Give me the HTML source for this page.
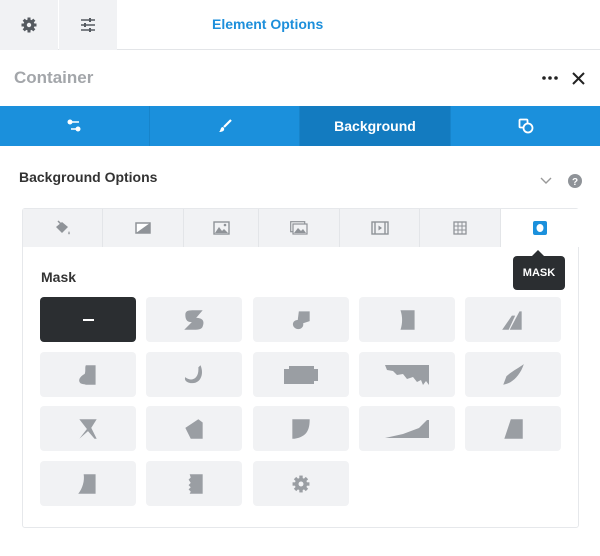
<!DOCTYPE html>
<html><head><meta charset="utf-8"><style>
*{margin:0;padding:0;box-sizing:border-box}
body{width:600px;height:556px;background:#fff;font-family:"Liberation Sans",sans-serif;position:relative;overflow:hidden}
.abs{position:absolute}
.top{left:0;top:0;width:600px;height:50px;border-bottom:1px solid #e3e5e8}
.tb{top:0;height:50px;background:#f1f2f4;display:flex;align-items:center;justify-content:center}
.bar{left:0;top:106px;width:600px;height:40px;background:#1b90dc;display:flex}
.bar div{height:40px;display:flex;align-items:center;justify-content:center;color:#fff;font-weight:bold;font-size:14px;border-right:1px solid #1784cb}
.panel{left:22px;top:208px;width:557px;height:320px;border:1px solid #e6e8eb;border-radius:3px}
.tab{position:absolute;top:0;height:38px;background:#f1f2f4;border-right:1px solid #e3e5e8;display:flex;align-items:center;justify-content:center}
.cell{position:absolute;width:96px;height:45px;background:#f1f2f4;border-radius:4px;display:flex;align-items:center;justify-content:center}
.cell svg{width:26px;height:26px}
</style></head><body>
<div class="abs top"></div>
<div class="abs tb" style="left:0;width:58px"><svg width="16" height="16" viewBox="0 0 16 16"><g fill="#555a60"><circle cx="8" cy="8" r="5.5"/><rect x="6.5" y="0.5" width="3" height="15"/><rect x="0.5" y="6.5" width="15" height="3"/><rect x="6.5" y="0.5" width="3" height="15" transform="rotate(45 8 8)"/><rect x="6.5" y="0.5" width="3" height="15" transform="rotate(-45 8 8)"/></g><circle cx="8" cy="8" r="2.2" fill="#f1f2f4"/></svg></div>
<div class="abs tb" style="left:59px;width:58px"><svg width="16" height="14" viewBox="0 0 16 14"><g stroke="#555a60" stroke-width="1.5"><line x1="1" y1="2" x2="15" y2="2"/><line x1="1" y1="7" x2="15" y2="7"/><line x1="1" y1="12" x2="15" y2="12"/></g><g fill="#555a60"><rect x="9" y="0" width="2" height="4"/><rect x="4" y="5" width="2" height="4"/><rect x="9" y="10" width="2" height="4"/></g></svg></div>
<div class="abs" style="left:212px;top:16px;font-size:14px;font-weight:bold;color:#1d8fdb">Element Options</div>
<div class="abs" style="left:14px;top:68px;font-size:17px;font-weight:bold;color:#a3a6aa">Container</div>
<svg class="abs" style="left:542px;top:76px" width="16" height="4" viewBox="0 0 16 4"><g fill="#222"><circle cx="2" cy="2" r="1.8"/><circle cx="8" cy="2" r="1.8"/><circle cx="14" cy="2" r="1.8"/></g></svg>
<svg class="abs" style="left:572px;top:72px" width="13" height="13" viewBox="0 0 13 13"><path d="M1 1L12 12M12 1L1 12" stroke="#222" stroke-width="2"/></svg>
<div class="abs bar">
<div style="width:150px"><svg width="16" height="14" viewBox="0 0 16 14"><circle cx="3" cy="3" r="2.5" fill="#fff"/><circle cx="11" cy="10" r="2.5" fill="#fff"/><path d="M3 3H12M4 10H11" stroke="#fff" stroke-width="1.4"/></svg></div>
<div style="width:150px"><svg width="14" height="14" viewBox="0 0 14 14"><path d="M13 1L6 8" stroke="#fff" stroke-width="2.2"/><path d="M5 8C2 8 3 12 1 13C4 13 7 12 6 9Z" fill="#fff"/></svg></div>
<div style="width:151px;background:#137bc0">Background</div>
<div style="width:149px;border:0"><svg width="16" height="16" viewBox="0 0 16 16"><rect x="1.5" y="1.5" width="8" height="8" rx="1" fill="none" stroke="#fff" stroke-width="1.8"/><circle cx="10" cy="10" r="4.5" fill="#1b90dc" stroke="#fff" stroke-width="1.8"/></svg></div>
</div>
<div class="abs" style="left:19px;top:169px;font-size:14px;font-weight:bold;color:#333">Background Options</div>
<svg class="abs" style="left:540px;top:177px" width="12" height="8" viewBox="0 0 12 8"><path d="M1 1L6 6L11 1" fill="none" stroke="#999" stroke-width="1.4"/></svg>
<svg class="abs" style="left:568px;top:174px" width="14" height="14" viewBox="0 0 14 14"><circle cx="7" cy="7" r="7" fill="#8f9398"/><text x="7" y="11" font-size="10" font-weight="bold" fill="#fff" text-anchor="middle" font-family="Liberation Sans">?</text></svg>
<div class="abs panel">
<div class="tab" style="left:0;width:80px"><svg width="18" height="16" viewBox="0 0 18 16"><path d="M2 7L8 2L14 7L8 13Z" fill="#8f9398"/><path d="M4 1L7 4" stroke="#8f9398" stroke-width="1.5"/><path d="M15 11C14 13 14 14 15 14.5C16 14 16 13 15 11Z" fill="#8f9398"/></svg></div>
<div class="tab" style="left:80px;width:81px"><svg width="16" height="12" viewBox="0 0 16 12"><rect x="1" y="1" width="14" height="10" fill="#fff" stroke="#8f9398" stroke-width="1.5"/><path d="M1 11L15 1V11Z" fill="#8f9398"/></svg></div>
<div class="tab" style="left:161px;width:75px"><svg width="17" height="14" viewBox="0 0 17 14"><rect x="1" y="1" width="15" height="12" fill="none" stroke="#8f9398" stroke-width="1.4"/><path d="M2 12L6 6L9 10L11 8L15 12Z" fill="#8f9398"/><circle cx="12" cy="4" r="1.3" fill="#8f9398"/></svg></div>
<div class="tab" style="left:236px;width:81px"><svg width="18" height="14" viewBox="0 0 18 14"><rect x="0.7" y="0.7" width="14" height="10" fill="none" stroke="#8f9398" stroke-width="1.2"/><rect x="3" y="3" width="14" height="10" fill="#f1f2f4" stroke="#8f9398" stroke-width="1.2"/><path d="M4 12L8 7L11 10L13 8L16 12Z" fill="#8f9398"/></svg></div>
<div class="tab" style="left:317px;width:80px"><svg width="18" height="14" viewBox="0 0 18 14"><rect x="1" y="1" width="16" height="12" fill="none" stroke="#8f9398" stroke-width="1.4"/><path d="M4 1V13M14 1V13" stroke="#8f9398" stroke-width="1.4"/><path d="M7.5 4.5L11 7L7.5 9.5Z" fill="#8f9398"/></svg></div>
<div class="tab" style="left:397px;width:81px"><svg width="14" height="14" viewBox="0 0 14 14"><rect x="1" y="1" width="12" height="12" fill="none" stroke="#8f9398" stroke-width="1.3"/><path d="M5 1V13M9 1V13M1 5H13M1 9H13" stroke="#8f9398" stroke-width="1"/></svg></div>
<div class="tab" style="left:478px;width:78px;background:#fff;border:0"><svg width="14" height="14" viewBox="0 0 14 14"><rect x="0" y="0" width="14" height="14" rx="2" fill="#1b90dc"/><ellipse cx="7" cy="7" rx="3.5" ry="4" fill="#fff"/></svg></div>
</div>
<div class="abs" style="left:532px;top:250px;width:0;height:0;border-left:6px solid transparent;border-right:6px solid transparent;border-bottom:6px solid #2b2e31"></div>
<div class="abs" style="left:513px;top:256px;width:52px;height:34px;background:#2b2e31;border-radius:4px;color:#fff;font-weight:bold;font-size:11px;display:flex;align-items:center;justify-content:center">MASK</div>
<div class="abs" style="left:41px;top:269px;font-size:14px;font-weight:bold;color:#333">Mask</div>
<div class="cell" style="left:40px;top:297px;background:#2b2e31"><div style="width:11px;height:2px;background:#fff"></div></div>
<div class="cell" style="left:146px;top:297px"><svg viewBox="0 0 24 24"><path d="M4 7C4 3 8 3 12 3H20L14 10C20 10 22 13 20 18C19 21 15 21 10 21H3L10 14C5 14 4 11 4 7Z" fill="#9a9ea3"/></svg></div>
<div class="cell" style="left:253px;top:297px"><svg viewBox="0 0 24 24"><path d="M10 4H20V13L14 15C15 20 9 22 6 19C3 16 5 12 9 12Z" fill="#9a9ea3"/></svg></div>
<div class="cell" style="left:359px;top:297px"><svg viewBox="0 0 24 24"><path d="M6 3H19V21H6C8 15 8 9 6 3Z" fill="#9a9ea3"/></svg></div>
<div class="cell" style="left:465px;top:297px"><svg viewBox="0 0 24 24"><path d="M2 21L11 8H14L8 21ZM9 21L18 4H20V21Z" fill="#9a9ea3"/></svg></div>
<div class="cell" style="left:40px;top:352px"><svg viewBox="0 0 24 24"><path d="M10 3H19V21H10C8 20 5 21 4 18C3 15 7 12 9 11C10 8 9 5 10 3Z" fill="#9a9ea3"/></svg></div>
<div class="cell" style="left:146px;top:352px"><svg viewBox="0 0 24 24"><path d="M18 3C22 12 17 22 7 19C4 18 3 16 4 14C8 18 17 17 16 5Z" fill="#9a9ea3"/></svg></div>
<div class="cell" style="left:253px;top:352px;"><svg viewBox="0 0 40 24" style="width:40px"><path d="M3 6H8V3H33V6H37V18H33V21H3Z" fill="#9a9ea3"/></svg></div>
<div class="cell" style="left:359px;top:352px"><svg viewBox="0 0 48 24" style="width:48px"><path d="M2 2H46V22L43 18L40 22L38 17L34 19L30 14L24 16L20 11L14 12L10 8L4 7Z" fill="#9a9ea3"/></svg></div>
<div class="cell" style="left:465px;top:352px"><svg viewBox="0 0 24 24"><path d="M22 2C18 5 12 8 6 13L3 21C10 20 18 14 22 2Z" fill="#9a9ea3"/></svg></div>
<div class="cell" style="left:40px;top:406px"><svg viewBox="0 0 24 24"><path d="M4 3H20L15 11L20 21H18L12 14L4 21L11 12Z" fill="#9a9ea3"/></svg></div>
<div class="cell" style="left:146px;top:406px"><svg viewBox="0 0 24 24"><path d="M16 3L20 6V21H9L4 11Z" fill="#9a9ea3"/></svg></div>
<div class="cell" style="left:253px;top:406px"><svg viewBox="0 0 24 24"><path d="M4 3H20C20 12 18 19 6 21H4Z" fill="#9a9ea3"/></svg></div>
<div class="cell" style="left:359px;top:406px"><svg viewBox="0 0 48 24" style="width:48px"><path d="M2 21L20 17L36 11L44 3H46V21Z" fill="#9a9ea3"/></svg></div>
<div class="cell" style="left:465px;top:406px"><svg viewBox="0 0 24 24"><path d="M10 3H21V21H4Z" fill="#9a9ea3"/></svg></div>
<div class="cell" style="left:40px;top:461px"><svg viewBox="0 0 24 24"><path d="M8 3H19V21H3C7 16 9 9 8 3Z" fill="#9a9ea3"/></svg></div>
<div class="cell" style="left:146px;top:461px"><svg viewBox="0 0 24 24"><path d="M8 3H20V21H8L9 19L7 17L9 15L7 13L9 11L7 8L9 6Z" fill="#9a9ea3"/></svg></div>
<div class="cell" style="left:253px;top:461px"><svg viewBox="0 0 16 16" style="width:18px;height:18px"><g fill="#9a9ea3"><circle cx="8" cy="8" r="5.5"/><rect x="6.5" y="0.5" width="3" height="15"/><rect x="0.5" y="6.5" width="15" height="3"/><rect x="6.5" y="0.5" width="3" height="15" transform="rotate(45 8 8)"/><rect x="6.5" y="0.5" width="3" height="15" transform="rotate(-45 8 8)"/></g><circle cx="8" cy="8" r="2.2" fill="#f1f2f4"/></svg></div>
</body></html>
